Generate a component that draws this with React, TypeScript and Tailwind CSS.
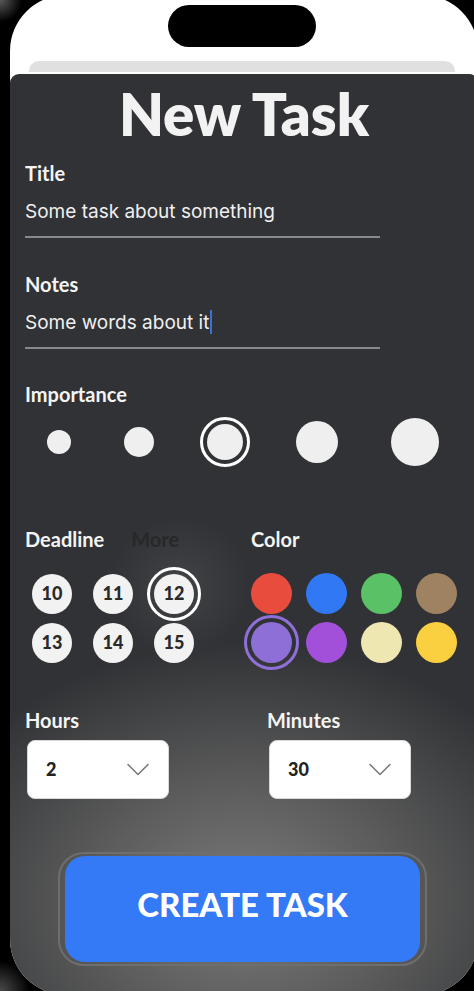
import React, { useState } from 'react';

const importanceSizes = ['w-[24px] h-[24px]', 'w-[30px] h-[30px]', 'w-[36px] h-[36px]', 'w-[42px] h-[42px]', 'w-[48px] h-[48px]'];
const deadlines = [10, 11, 12, 13, 14, 15];
const colors = ['bg-[#e84c3d]', 'bg-[#3078f4]', 'bg-[#5bc166]', 'bg-[#9e8262]', 'bg-[#8e6fd8]', 'bg-[#a24fda]', 'bg-[#efe7b2]', 'bg-[#fad040]'];

const label = "font-['Lato',sans-serif] text-[20px] font-bold leading-[19px] text-[#f4f4f4]";
const inputText = "font-['Inter',sans-serif] text-[19px] leading-none text-[#f0f0f0]";

function Chevron() {
  return (
    <svg width="22" height="13" viewBox="0 0 22 13" fill="none">
      <path d="M1 1.5 L11 11.5 L21 1.5" stroke="#7a7a7a" strokeWidth="1.6" strokeLinecap="round" strokeLinejoin="round" />
    </svg>
  );
}

function Select({ value }: { value: string }) {
  return (
    <div className="ml-[2px] mt-[10px] flex h-[59px] w-[142px] items-center justify-between rounded-[8px] border border-[#d8d8d8] bg-white pl-[18px] pr-[19px]">
      <span className="font-['Lato',sans-serif] text-[18px] font-black text-[#222]">{value}</span>
      <Chevron />
    </div>
  );
}

export default function App() {
  const [importance, setImportance] = useState(2);
  const [deadline, setDeadline] = useState(12);
  const [color, setColor] = useState(4);

  return (
    <div className="h-[991px] w-[474px] overflow-hidden bg-black bg-[radial-gradient(circle_22px_at_0_0,#5a5a5a,transparent),radial-gradient(circle_30px_at_0_100%,#4a4a4a,transparent)]">
      {/* screen */}
      <div className="ml-[10px] -mt-[5px] flex h-[1000px] w-[468px] flex-col overflow-hidden rounded-[56px] bg-white">
        <div className="ml-[158px] mt-[10px] h-[42px] w-[148px] rounded-full bg-black" />
        <div className="ml-[19px] mt-[14px] h-[11px] w-[426px] rounded-t-[10px] bg-[#e0e0e0]" />
        <div className="mt-[2px] flex flex-1 flex-col rounded-t-[9px] bg-[#303235] bg-[radial-gradient(circle_70px_at_170px_512px,#414346,transparent),radial-gradient(ellipse_340px_260px_at_50%_90%,#7b7b7b_0%,#5c5c5c_45%,#303235_100%)] px-[15px]">
          <h1 className="mt-[11px] h-[58px] text-center font-['Lato',sans-serif] text-[58px] font-extrabold leading-none text-[#f2f2f2]">
            New Task
          </h1>

          {/* Title */}
          <div className={`mt-[21px] ${label}`}>Title</div>
          <div className={`mt-[19px] h-[36px] w-[355px] border-b-2 border-[#88898c] ${inputText}`}>
            Some task about something
          </div>

          {/* Notes */}
          <div className={`mt-[37px] ${label}`}>Notes</div>
          <div className={`mt-[19px] flex h-[36px] w-[355px] items-start border-b-2 border-[#88898c] ${inputText}`}>
            <span>Some words about it</span>
            <span className="-mt-[3px] ml-px inline-block h-[24px] w-[2px] bg-[#3a70dc]" />
          </div>

          {/* Importance */}
          <div className={`mt-[36px] ${label}`}>Importance</div>
          <div className="ml-[22px] mt-[12px] flex h-[52px] items-center gap-[53px]">
            {importanceSizes.map((s, i) => (
              <button
                key={i}
                onClick={() => setImportance(i)}
                className={`${s} rounded-full bg-[#efefef] ${importance === i ? 'outline-[3px] outline-offset-4 outline-white' : ''}`}
              />
            ))}
          </div>

          {/* Deadline + Color */}
          <div className="mt-[62px] flex">
            <div className="w-[226px]">
              <div className="flex gap-[27px]">
                <span className={label}>Deadline</span>
                <span className="font-['Lato',sans-serif] text-[20px] font-bold leading-[19px] text-[#27282a]">More</span>
              </div>
              <div className="ml-[7px] mt-[24px] grid w-max grid-cols-[40px_40px_40px] auto-rows-[41px] gap-x-[21px] gap-y-[8px]">
                {deadlines.map((d) => (
                  <div key={d} className="flex items-center">
                    <button
                      onClick={() => setDeadline(d)}
                      className={`flex h-[40px] w-[40px] items-center justify-center rounded-full bg-[#f2f2f2] font-['Lato',sans-serif] text-[18px] font-black text-[#2a2a2a] ${deadline === d ? 'outline-[3px] outline-offset-4 outline-white' : ''}`}
                    >
                      {d}
                    </button>
                  </div>
                ))}
              </div>
            </div>
            <div>
              <div className={label}>Color</div>
              <div className="mt-[24px] grid grid-cols-[41px_41px_41px_41px] auto-rows-[41px] gap-x-[14px] gap-y-[8px]">
                {colors.map((c, i) => (
                  <button
                    key={c}
                    onClick={() => setColor(i)}
                    className={`h-[41px] w-[41px] rounded-full ${c} ${color === i ? 'outline-[3px] outline-offset-4 outline-[#8f70d8]' : ''}`}
                  />
                ))}
              </div>
            </div>
          </div>

          {/* Hours + Minutes */}
          <div className="mt-[48px] flex">
            <div className="w-[242px]">
              <div className={label}>Hours</div>
              <Select value="2" />
            </div>
            <div>
              <div className={label}>Minutes</div>
              <Select value="30" />
            </div>
          </div>

          {/* Create */}
          <div className="ml-[33px] mt-[53px] w-[369px] rounded-[26px] border-2 border-[#6e6e6e] px-[5px] py-[2px]">
            <button className="flex h-[106px] w-full items-center justify-center rounded-[20px] bg-[#3479f5] pb-[8px] font-['Lato',sans-serif] text-[33px] font-black text-white">
              CREATE TASK
            </button>
          </div>
        </div>
      </div>
    </div>
  );
}
